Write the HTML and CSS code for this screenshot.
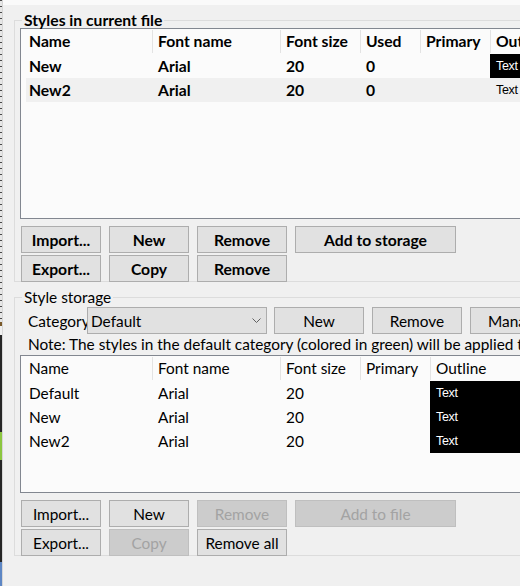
FILE: index.html
```html
<!DOCTYPE html>
<html>
<head>
<meta charset="utf-8">
<link rel="stylesheet" href="styles.css">
</head>
<body>
<div class="frame">
  <div class="edge"></div>
  <div class="main">
    <div class="topstrip"></div>

    <fieldset class="group">
      <legend class="bold">Styles in current file</legend>
      <div class="list list1 bold">
        <div class="row head cols1">
          <div class="c first">Name</div>
          <div class="c sep">Font name</div>
          <div class="c sep">Font size</div>
          <div class="c sep">Used</div>
          <div class="c sep">Primary</div>
          <div class="c sep">Outline</div>
        </div>
        <div class="row cols1">
          <div class="c first">New</div>
          <div class="c">Arial</div>
          <div class="c">20</div>
          <div class="c">0</div>
          <div class="c"></div>
          <div class="c sample blk">Text</div>
        </div>
        <div class="row cols1 alt">
          <div class="c first">New2</div>
          <div class="c">Arial</div>
          <div class="c">20</div>
          <div class="c">0</div>
          <div class="c"></div>
          <div class="c sample">Text</div>
        </div>
      </div>
      <div class="btns bold">
        <div class="btnrow">
          <button class="btn w80">Import...</button>
          <button class="btn w80">New</button>
          <button class="btn w90">Remove</button>
          <button class="btn w161">Add to storage</button>
        </div>
        <div class="btnrow">
          <button class="btn w80">Export...</button>
          <button class="btn w80">Copy</button>
          <button class="btn w90">Remove</button>
        </div>
      </div>
    </fieldset>

    <fieldset class="group g2">
      <legend>Style storage</legend>
      <div class="catrow">
        <span class="catlabel">Category</span>
        <div class="combo">
          <span>Default</span>
          <svg class="chev" width="9" height="5" viewBox="0 0 9 5"><polyline points="0.5,0.5 4.5,4.5 8.5,0.5" fill="none" stroke="#606060" stroke-width="1"/></svg>
        </div>
        <button class="btn w90">New</button>
        <button class="btn w90">Remove</button>
        <button class="btn w90">Manage</button>
      </div>
      <div class="note">Note: The styles in the default category (colored in green) will be applied to new files.</div>
      <div class="list list2">
        <div class="row head cols2">
          <div class="c first">Name</div>
          <div class="c sep">Font name</div>
          <div class="c sep">Font size</div>
          <div class="c sep">Primary</div>
          <div class="c sep">Outline</div>
        </div>
        <div class="row cols2">
          <div class="c first">Default</div>
          <div class="c">Arial</div>
          <div class="c">20</div>
          <div class="c"></div>
          <div class="c sample blk">Text</div>
        </div>
        <div class="row cols2">
          <div class="c first">New</div>
          <div class="c">Arial</div>
          <div class="c">20</div>
          <div class="c"></div>
          <div class="c sample blk">Text</div>
        </div>
        <div class="row cols2">
          <div class="c first">New2</div>
          <div class="c">Arial</div>
          <div class="c">20</div>
          <div class="c"></div>
          <div class="c sample blk">Text</div>
        </div>
      </div>
      <div class="btns">
        <div class="btnrow">
          <button class="btn w80">Import...</button>
          <button class="btn w80">New</button>
          <button class="btn w90 dis">Remove</button>
          <button class="btn w161 dis">Add to file</button>
        </div>
        <div class="btnrow">
          <button class="btn w80">Export...</button>
          <button class="btn w80 dis">Copy</button>
          <button class="btn w90">Remove all</button>
        </div>
      </div>
    </fieldset>
  </div>
</div>
</body>
</html>
```

FILE: styles.css
```css
* { box-sizing: border-box; }
html, body { margin: 0; padding: 0; }
body {
  width: 520px;
  height: 586px;
  overflow: hidden;
  background: #f0f0f0;
  font-family: Lato, "Noto Sans", sans-serif;
  font-size: 15.4px;
  color: #000;
}
.bold { font-weight: 700; font-size: 15.7px; }

.frame { display: flex; height: 586px; }
.edge {
  flex: none;
  width: 3px;
  border-right: 1px solid #d6d6d6;
  background:
    linear-gradient(to bottom, transparent 0 322px, #7a5a2a 322px 326px, transparent 326px 335px, #262626 335px 432px, #8cc63f 432px 460px, #262626 460px 562px, #5d86c4 562px) 0 0 / 2px 100% no-repeat,
    repeating-linear-gradient(to bottom, #4a4a4a 0 1px, #e6e6e6 1px 6px) 0 0 / 2px 322px no-repeat;
}
.main { flex: none; width: 600px; }
.topstrip { height: 5px; background: #fafafa; }

.group {
  margin: 7px 0 0 11px;
  padding: 0 0 0 5px;
  border: 1px solid #dcdcdc;
  width: 580px;
  min-width: 0;
}
.group legend {
  margin-left: 2px;
  padding: 0 2px;
  line-height: 16px;
}

.list {
  border: 1px solid #828790;
  background: #fbfbfb;
}
.list1 { height: 191px; }
.list2 { height: 138px; }

.row { display: grid; height: 24px; line-height: 24px; }
.row.head { height: 25px; line-height: 25px; }
.cols1 { grid-template-columns: 131px 128px 80px 60px 70px 1fr; }
.cols2 { grid-template-columns: 131px 128px 80px 70px 1fr; }
.c { padding-left: 6px; white-space: nowrap; overflow: hidden; }
.c.first { padding-left: 8px; }
.c.sep {
  background: linear-gradient(#e3e3e3, #e3e3e3) 0 1px / 1px 23px no-repeat;
}
.alt { background: linear-gradient(to right, transparent 5px, #f0f0f0 5px); }
.sample {
  font-family: "Liberation Sans", Arial, sans-serif;
  font-weight: 400;
  font-size: 12.5px;
  letter-spacing: -0.3px;
}
.blk { background: #000; color: #fff; }

.btns {
  margin: 7px 0 -1px 1px;
  display: flex;
  flex-direction: column;
  gap: 2px;
}
.btnrow { display: flex; gap: 8px; }
.btn {
  height: 27px;
  padding: 0;
  border: 1px solid #adadad;
  background: #e1e1e1;
  font: inherit;
  color: #000;
  white-space: nowrap;
  overflow: hidden;
}
.w80 { width: 80px; }
.w90 { width: 90px; }
.w161 { width: 161px; }
.dis { background: #cccccc; border-color: #bfbfbf; color: #a3a3a3; }

.g2 { margin-top: 7px; }
.catrow {
  margin-top: 2px;
  height: 27px;
  display: flex;
  align-items: center;
  gap: 8px;
}
.catlabel { width: 59px; margin-left: 8px; margin-right: -8px; white-space: nowrap; }
.combo {
  width: 180px;
  height: 27px;
  margin-right: -1px;
  border: 1px solid #adadad;
  background: #e1e1e1;
  display: flex;
  align-items: center;
  justify-content: space-between;
  padding: 0 5px 0 3px;
}
.chev { display: block; }
.note {
  height: 21px;
  line-height: 21px;
  padding-left: 8px;
  white-space: nowrap;
}
```
